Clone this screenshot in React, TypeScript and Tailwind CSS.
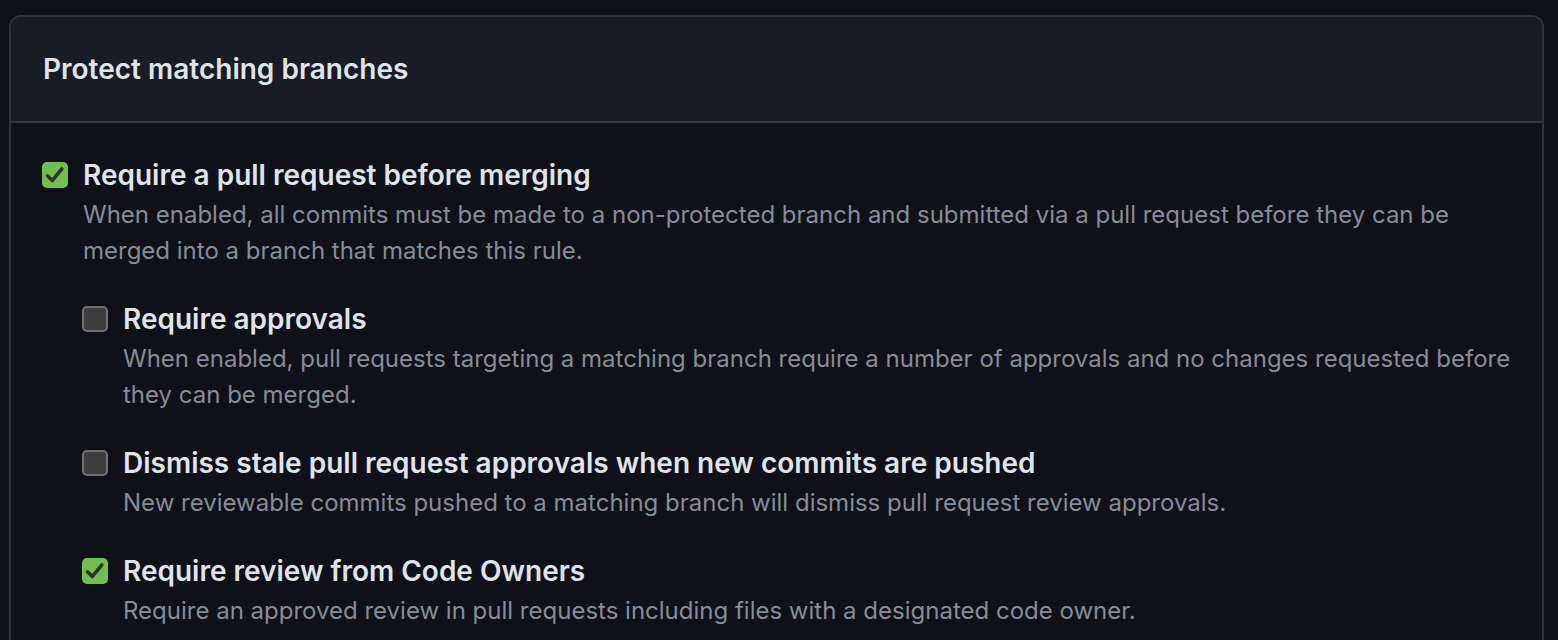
import React from "react";

type Rule = { title: string; desc: string; checked: boolean };

const nested: Rule[] = [
  {
    title: "Require approvals",
    desc: "When enabled, pull requests targeting a matching branch require a number of approvals and no changes requested before they can be merged.",
    checked: false,
  },
  {
    title: "Dismiss stale pull request approvals when new commits are pushed",
    desc: "New reviewable commits pushed to a matching branch will dismiss pull request review approvals.",
    checked: false,
  },
  {
    title: "Require review from Code Owners",
    desc: "Require an approved review in pull requests including files with a designated code owner.",
    checked: true,
  },
];

function Box({ checked }: { checked: boolean }) {
  if (checked) {
    return (
      <div className="w-[26px] h-[26px] shrink-0 rounded-[5px] bg-[#70c050] mt-[5px]">
        <svg width="26" height="26" viewBox="0 0 26 26" fill="none">
          <path d="M5.5 13.8 L10.2 18.6 L19.8 7" stroke="#323232" strokeWidth="3.6" strokeLinecap="round" strokeLinejoin="round" />
        </svg>
      </div>
    );
  }
  return <div className="w-[26px] h-[26px] shrink-0 rounded-[5px] bg-[#3e3e3e] border-2 border-[#707070] mt-[5px]" />;
}

function Row({ rule, children }: { rule: Rule; children?: React.ReactNode }) {
  return (
    <div className="flex gap-[15px]">
      <Box checked={rule.checked} />
      <div className="flex-1">
        <div className="text-[28px] leading-[36px] font-semibold text-[#dfe4ea]">{rule.title}</div>
        <div className="mt-[4px] text-[24px] leading-[36px] text-[#858d97] pr-[20px]">{rule.desc}</div>
        {children}
      </div>
    </div>
  );
}

export default function App() {
  return (
    <div className="min-h-[640px] bg-[#0e1117] pt-[15px] pl-[9px] pr-[14px] overflow-hidden" style={{ fontFamily: "Inter, 'Noto Sans', sans-serif" }}>
      <div className="rounded-t-[12px] border-2 border-b-0 border-[#30353c] h-[640px]">
        <div className="h-[106px] bg-[#181c24] border-b-2 border-[#30353c] rounded-t-[10px] flex items-center pl-[32px]">
          <span className="text-[28px] font-semibold text-[#dfe4ea]">Protect matching branches</span>
        </div>
        <div className="pt-[34px] pl-[31px]">
          <Row
            rule={{
              title: "Require a pull request before merging",
              desc: "When enabled, all commits must be made to a non-protected branch and submitted via a pull request before they can be merged into a branch that matches this rule.",
              checked: true,
            }}
          >
            <div className="ml-[-1px] flex flex-col gap-[32px] mt-[32px]">
              {nested.map((r) => (
                <Row key={r.title} rule={r} />
              ))}
            </div>
          </Row>
        </div>
      </div>
    </div>
  );
}
